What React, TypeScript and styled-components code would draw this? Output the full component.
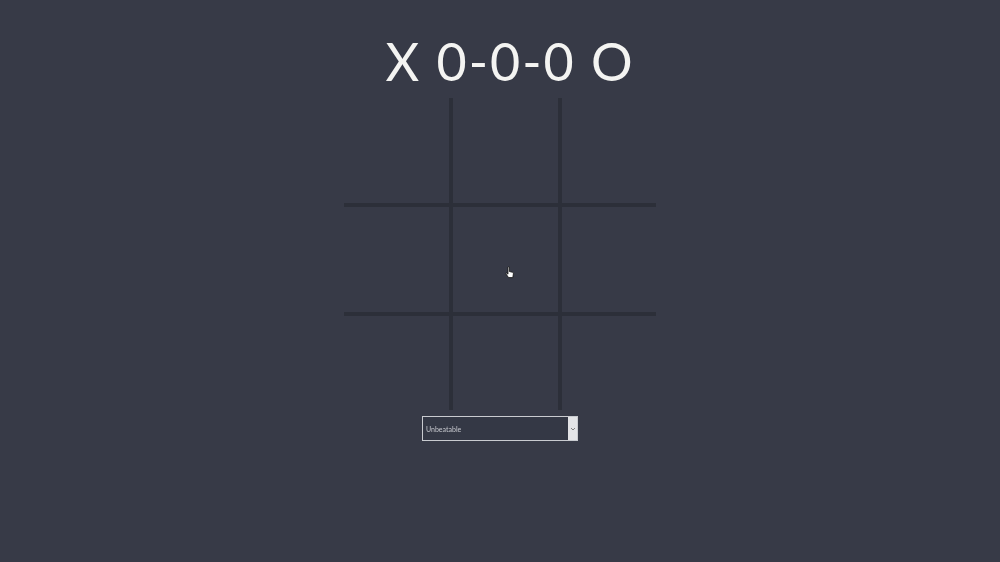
import React from 'react';
import styled, { createGlobalStyle } from 'styled-components';

const GlobalStyle = createGlobalStyle`
  html, body {
    margin: 0;
    padding: 0;
    background: #373a47;
    font-family: "Lato", "Noto Sans", sans-serif;
    -webkit-font-smoothing: antialiased;
  }
`;

const Page = styled.div`
  height: 562px;
  display: flex;
  flex-direction: column;
  align-items: center;
  position: relative;
`;

const Score = styled.h1`
  margin: 30px 0 0 20px;
  font-size: 52px;
  font-weight: 400;
  line-height: 62px;
  height: 64px;
  color: #f4f4f2;
  letter-spacing: 2px;
`;

const Board = styled.div`
  margin-top: 4px;
  display: grid;
  grid-template-columns: 109px 109px 94px;
  grid-template-rows: 109px 109px 94px;
`;

const Cell = styled.div<{ $right: boolean; $bottom: boolean }>`
  border-right: ${(p) => (p.$right ? '4px solid #2c2f39' : 'none')};
  border-bottom: ${(p) => (p.$bottom ? '4px solid #2c2f39' : 'none')};
  cursor: pointer;
`;

const Difficulty = styled.div`
  margin-top: 6px;
  width: 156px;
  height: 25px;
  box-sizing: border-box;
  border: 1px solid #c9cbd0;
  display: flex;
  background: #343845;
`;

const Label = styled.div`
  flex: 1;
  font-size: 7px;
  color: #c7c9cf;
  display: flex;
  align-items: center;
  padding-left: 3px;
  opacity: 0.99;
  will-change: transform;
`;

const Arrow = styled.div`
  width: 9px;
  background: #e3e4e7;
  display: flex;
  align-items: center;
  justify-content: center;
`;

const Pointer = styled.svg`
  position: absolute;
  left: 505px;
  top: 266px;
`;

const App = () => {
  const cells = [0, 1, 2, 3, 4, 5, 6, 7, 8];
  return (
    <>
      <GlobalStyle />
      <Page>
        <Score>X 0-0-0 O</Score>
        <Board>
          {cells.map((i) => (
            <Cell key={i} $right={i % 3 !== 2} $bottom={i < 6} />
          ))}
        </Board>
        <Difficulty>
          <Label>Unbeatable</Label>
          <Arrow>
            <svg width="6" height="4" viewBox="0 0 6 4">
              <path d="M1 1 L3 3 L5 1" stroke="#666" strokeWidth="0.8" fill="none" />
            </svg>
          </Arrow>
        </Difficulty>
        <Pointer width="10" height="13" viewBox="0 0 10 13">
          <path
            d="M3 1 Q3.8 0.4 4.4 1 L4.4 5.5 L7.5 6.3 Q8.6 6.7 8.4 7.8 L7.8 11.6 L3.6 11.6 L1 8 Q0.6 7 1.6 7 L3 8.2 Z"
            fill="#fff"
            stroke="#111"
            strokeWidth="0.8"
          />
        </Pointer>
      </Page>
    </>
  );
};

export default App;
